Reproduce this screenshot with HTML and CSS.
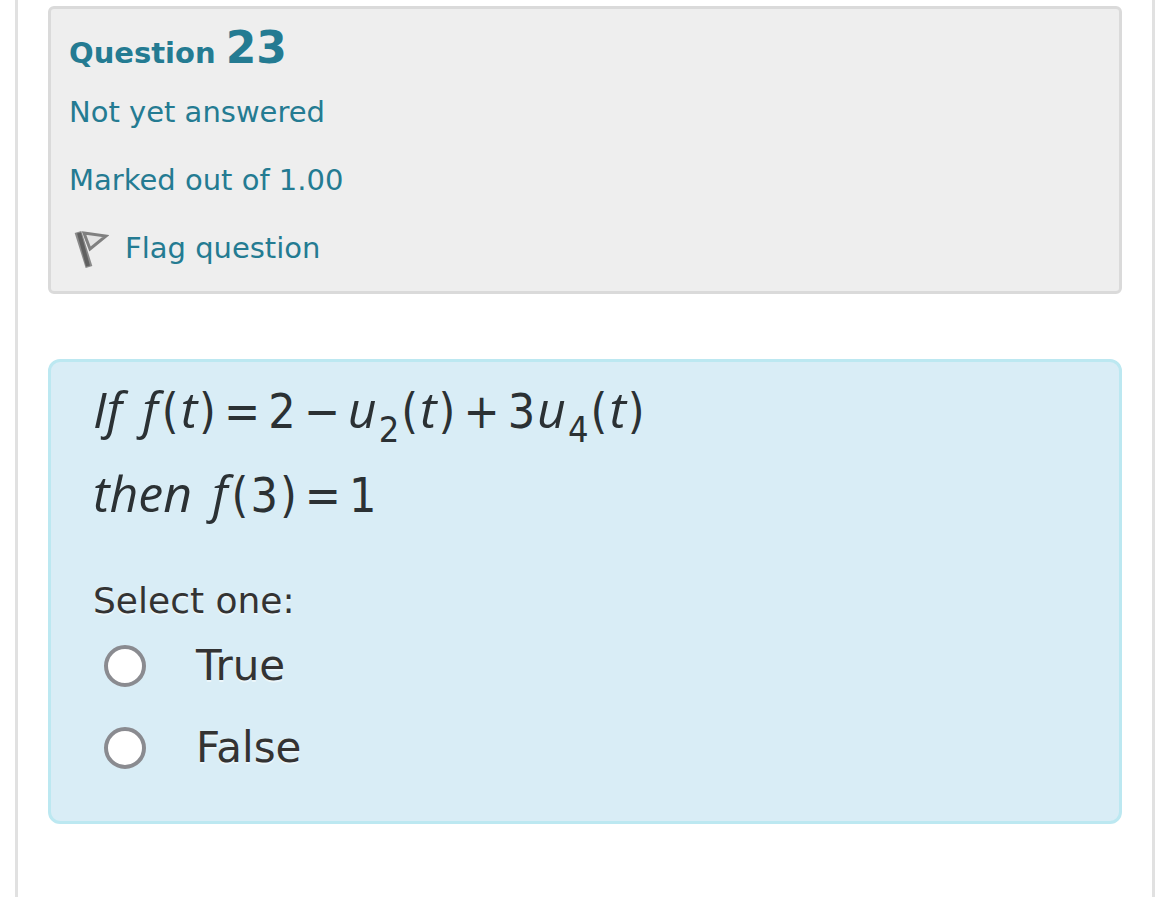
FILE: index.html
```html
<!DOCTYPE html>
<html lang="en">
<head>
<meta charset="utf-8">
<meta name="viewport" content="width=device-width, initial-scale=1">
<title>Question 23</title>
<link rel="stylesheet" href="styles.css">
</head>
<body>
<main class="page">
  <section class="info">
    <h1 class="info-title">Question <span class="info-number">23</span></h1>
    <p class="info-line">Not yet answered</p>
    <p class="info-line">Marked out of 1.00</p>
    <a class="info-line flag" href="#flag">
      <svg class="flag-icon" viewBox="0 0 36 40" aria-hidden="true">
        <path d="M5 4 L16 39" stroke="#8a8a8a" stroke-width="7" fill="none"/>
        <path d="M6 5 L15 38" stroke="#606060" stroke-width="4" fill="none"/>
        <path d="M11 5 L33 8 L17 21 Z" stroke="#808080" stroke-width="3" fill="#e4e4e4"/>
      </svg>
      <span>Flag question</span>
    </a>
  </section>
  <form class="question">
    <div class="formula">
      <div class="row"><i class="word">If</i><span class="term"><i class="fn">f</i><span>(</span><i>t</i><span>)</span></span><span>=</span><span>2</span><span>−</span><span class="term"><span><i>u</i><sub>2</sub></span><span>(</span><i>t</i><span>)</span></span><span>+</span><span class="term"><span>3</span><span><i>u</i><sub>4</sub></span><span>(</span><i>t</i><span>)</span></span></div>
      <div class="row"><i class="word">then</i><span class="term"><i class="fn">f</i><span>(</span><span>3</span><span>)</span></span><span>=</span><span>1</span></div>
    </div>
    <fieldset class="answers">
      <legend class="prompt">Select one:</legend>
      <label class="choice"><input class="radio" type="radio" name="answer" value="true"><span>True</span></label>
      <label class="choice"><input class="radio" type="radio" name="answer" value="false"><span>False</span></label>
    </fieldset>
  </form>
</main>
</body>
</html>
```
FILE: styles.css
```css
* {
  box-sizing: border-box;
}

body {
  margin: 0;
  background: #fff;
  color: #333;
  font-family: Verdana, "DejaVu Sans", sans-serif;
}

.page {
  min-height: 100vh;
  margin: 0 15px;
  padding: 6px 30px;
  border: solid #e1e1e1;
  border-width: 0 3px;
}

.info {
  padding: 12px 18px 25px;
  border: 3px solid #dadada;
  border-radius: 6px;
  background: #eee;
  color: #247b92;
}

.info-title {
  margin: 0 0 14px;
  font-size: 29px;
  line-height: 54px;
}

.info-number {
  font-size: 44px;
}

.info-line {
  margin: 0 0 32px;
  font-size: 29px;
  line-height: 36px;
}

.flag {
  display: flex;
  align-items: center;
  gap: 16px;
  margin: 0;
  padding-left: 4px;
  color: inherit;
  text-decoration: none;
}

.flag-icon {
  width: 36px;
  height: 40px;
  margin: -2px 0;
}

.question {
  margin-top: 65px;
  padding: 7px 42px 32px;
  border: 3px solid #bce8f1;
  border-radius: 12px;
  background: #d9edf6;
}

.formula {
  color: #2b3134;
  font-family: "DejaVu Sans Condensed", "DejaVu Sans", sans-serif;
  font-size: 48px;
}

.formula i {
  font-family: "Open Sans", "Noto Sans", sans-serif;
  font-size: 50px;
  line-height: 1;
}

.row {
  display: flex;
  align-items: baseline;
  gap: 8px;
  line-height: 84px;
}

.word {
  margin-right: 12px;
}

.term {
  display: flex;
  align-items: baseline;
  gap: 2px;
}

.fn {
  margin-right: 2px;
}

.formula sub {
  margin-left: 2px;
  font-size: 36px;
  line-height: 0;
  vertical-align: -14px;
}

.answers {
  margin: 40px 0 0;
  padding: 0;
  border: 0;
}

.prompt {
  padding: 0;
  font-size: 36px;
  line-height: 48px;
  text-shadow: 0 2px 0 rgba(255, 255, 255, 0.5);
}

.choice {
  display: flex;
  align-items: center;
  gap: 50px;
  padding-left: 11px;
  font-size: 42px;
  line-height: 82px;
  text-shadow: 0 2px 0 rgba(255, 255, 255, 0.5);
}

.radio {
  width: 42px;
  height: 42px;
  margin: 0;
  border: 4px solid #8a8b90;
  border-radius: 50%;
  background: #fff;
  appearance: none;
}

.radio:checked {
  background: radial-gradient(#247b92 45%, #fff 50%);
}
```
